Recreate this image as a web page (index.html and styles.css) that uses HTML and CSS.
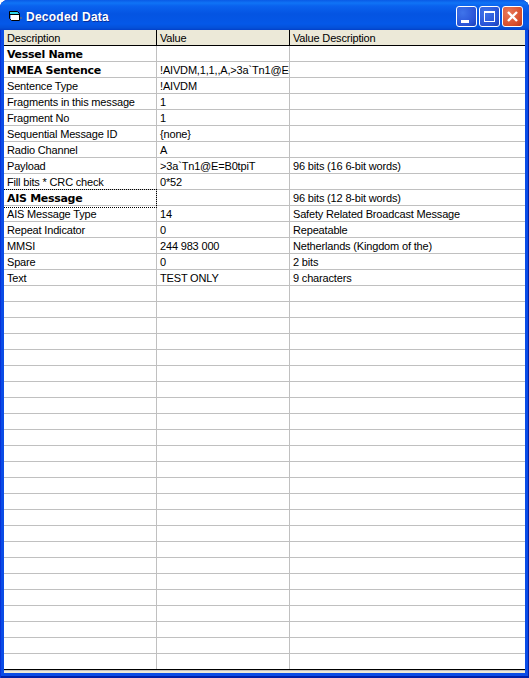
FILE: index.html
```html
<!DOCTYPE html>
<html lang="en">
<head>
<meta charset="utf-8">
<title>Decoded Data</title>
<link rel="stylesheet" href="styles.css">
</head>
<body>
<div class="window">
  <div class="titlebar">
    <svg class="app-icon" width="13" height="12" viewBox="0 0 13 12">
      <path d="M1.5 4.5V9.5L2.5 10.5H10.5V4.5z" fill="#fff"/>
      <path d="M0.5 1.5H8.5L10.5 3.5V10.5H2.5L0.5 8.5z" fill="none" stroke="#000"/>
      <path d="M1 2H8.3L10 4H1z" fill="#2fd6e8"/>
      <path d="M1 4.5H10" stroke="#000" fill="none"/>
      <path d="M11 8h2" stroke="#8a7a4a" fill="none"/>
    </svg>
    <span class="title">Decoded Data</span>
    <div class="controls">
      <div class="btn btn-blue">
        <svg width="19" height="19" viewBox="0 0 19 19"><rect x="4" y="13" width="8" height="3" fill="#fff"/></svg>
      </div>
      <div class="btn btn-blue">
        <svg width="19" height="19" viewBox="0 0 19 19"><rect x="4.5" y="4.5" width="10" height="10" fill="none" stroke="#fff"/><rect x="4" y="4" width="11" height="2" fill="#fff"/></svg>
      </div>
      <div class="btn btn-red">
        <svg width="19" height="19" viewBox="0 0 19 19"><path d="M5 5l9 9M14 5l-9 9" stroke="#fff" stroke-width="2.4" fill="none"/></svg>
      </div>
    </div>
  </div>
  <div class="client">
    <div class="grid">
      <div class="row head"><div class="cell">Description</div><div class="cell">Value</div><div class="cell">Value Description</div></div>
      <div class="row"><div class="cell bold">Vessel Name</div><div class="cell"></div><div class="cell"></div></div>
      <div class="row"><div class="cell bold">NMEA Sentence</div><div class="cell">!AIVDM,1,1,,A,&gt;3a`Tn1@E=B0tpiT,0*52</div><div class="cell"></div></div>
      <div class="row"><div class="cell">Sentence Type</div><div class="cell">!AIVDM</div><div class="cell"></div></div>
      <div class="row"><div class="cell">Fragments in this message</div><div class="cell">1</div><div class="cell"></div></div>
      <div class="row"><div class="cell">Fragment No</div><div class="cell">1</div><div class="cell"></div></div>
      <div class="row"><div class="cell">Sequential Message ID</div><div class="cell">{none}</div><div class="cell"></div></div>
      <div class="row"><div class="cell">Radio Channel</div><div class="cell">A</div><div class="cell"></div></div>
      <div class="row"><div class="cell">Payload</div><div class="cell">&gt;3a`Tn1@E=B0tpiT</div><div class="cell">96 bits (16 6-bit words)</div></div>
      <div class="row"><div class="cell">Fill bits * CRC check</div><div class="cell">0*52</div><div class="cell"></div></div>
      <div class="row"><div class="cell bold focus">AIS Message</div><div class="cell"></div><div class="cell">96 bits (12 8-bit words)</div></div>
      <div class="row"><div class="cell">AIS Message Type</div><div class="cell">14</div><div class="cell">Safety Related Broadcast Message</div></div>
      <div class="row"><div class="cell">Repeat Indicator</div><div class="cell">0</div><div class="cell">Repeatable</div></div>
      <div class="row"><div class="cell">MMSI</div><div class="cell">244 983 000</div><div class="cell">Netherlands (Kingdom of the)</div></div>
      <div class="row"><div class="cell">Spare</div><div class="cell">0</div><div class="cell">2 bits</div></div>
      <div class="row"><div class="cell">Text</div><div class="cell">TEST ONLY</div><div class="cell">9 characters</div></div>
      <div class="row"><div class="cell"></div><div class="cell"></div><div class="cell"></div></div>
      <div class="row"><div class="cell"></div><div class="cell"></div><div class="cell"></div></div>
      <div class="row"><div class="cell"></div><div class="cell"></div><div class="cell"></div></div>
      <div class="row"><div class="cell"></div><div class="cell"></div><div class="cell"></div></div>
      <div class="row"><div class="cell"></div><div class="cell"></div><div class="cell"></div></div>
      <div class="row"><div class="cell"></div><div class="cell"></div><div class="cell"></div></div>
      <div class="row"><div class="cell"></div><div class="cell"></div><div class="cell"></div></div>
      <div class="row"><div class="cell"></div><div class="cell"></div><div class="cell"></div></div>
      <div class="row"><div class="cell"></div><div class="cell"></div><div class="cell"></div></div>
      <div class="row"><div class="cell"></div><div class="cell"></div><div class="cell"></div></div>
      <div class="row"><div class="cell"></div><div class="cell"></div><div class="cell"></div></div>
      <div class="row"><div class="cell"></div><div class="cell"></div><div class="cell"></div></div>
      <div class="row"><div class="cell"></div><div class="cell"></div><div class="cell"></div></div>
      <div class="row"><div class="cell"></div><div class="cell"></div><div class="cell"></div></div>
      <div class="row"><div class="cell"></div><div class="cell"></div><div class="cell"></div></div>
      <div class="row"><div class="cell"></div><div class="cell"></div><div class="cell"></div></div>
      <div class="row"><div class="cell"></div><div class="cell"></div><div class="cell"></div></div>
      <div class="row"><div class="cell"></div><div class="cell"></div><div class="cell"></div></div>
      <div class="row"><div class="cell"></div><div class="cell"></div><div class="cell"></div></div>
      <div class="row"><div class="cell"></div><div class="cell"></div><div class="cell"></div></div>
      <div class="row"><div class="cell"></div><div class="cell"></div><div class="cell"></div></div>
      <div class="row"><div class="cell"></div><div class="cell"></div><div class="cell"></div></div>
      <div class="row"><div class="cell"></div><div class="cell"></div><div class="cell"></div></div>
      <div class="row last"><div class="cell"></div><div class="cell"></div><div class="cell"></div></div>
    </div>
    <div class="hscroll"></div>
  </div>
</div>
</body>
</html>
```
FILE: styles.css
```css
html, body {
  margin: 0;
  padding: 0;
  background: #fff;
  overflow: hidden;
}
.window {
  width: 529px;
  height: 678px;
  display: flex;
  flex-direction: column;
  box-sizing: border-box;
  border-radius: 8px 8px 0 0;
  overflow: hidden;
  background: #0a4ce6;
  box-shadow: inset 1px 0 #0831d9, inset -1px 0 #0020a8, inset 0 -2px #0020a8;
  font-family: "Liberation Sans", Arial, sans-serif;
}
.titlebar {
  height: 30px;
  flex: none;
  display: flex;
  align-items: center;
  padding: 0 6px 0 9px;
  box-sizing: border-box;
  background: linear-gradient(#0a5ae6 0, #0f74f6 3px, #0a62ee 6px, #0454e2 14px, #0458e8 24px, #0450d8 28px, #0340c8 30px);
}
.app-icon {
  flex: none;
  margin-top: 2px;
}
.title {
  margin-left: 4px;
  margin-top: 4px;
  color: #fff;
  font-family: "Liberation Sans", Arial, sans-serif;
  font-size: 12px;
  font-weight: 700;
  letter-spacing: 0.25px;
  text-shadow: 1px 1px 0 #0a2f9a;
}
.controls {
  margin-left: auto;
  display: flex;
  gap: 2px;
  padding-top: 2px;
}
.btn {
  width: 21px;
  height: 21px;
  box-sizing: border-box;
  border: 1px solid #fff;
  border-radius: 3px;
  display: flex;
  align-items: center;
  justify-content: center;
}
.btn-blue {
  background: radial-gradient(circle at 30% 30%, #3f74ea, #2a55d8 65%, #1c3fb8);
}
.btn-red {
  background: radial-gradient(circle at 30% 30%, #e8795a, #d9512e 65%, #b8361a);
}
.client {
  flex: none;
  height: 643px;
  margin: 0 4px;
  background: #ece9d8;
  display: flex;
  flex-direction: column;
}
.grid {
  background: #fff;
  flex: none;
}
.row {
  display: grid;
  grid-template-columns: 153px 133px 1fr;
  height: 16px;
  box-sizing: border-box;
  border-bottom: 1px solid #c0c0c0;
}
.row.head {
  background: #ece9d8;
  border-bottom: 1px solid #000;
}
.row.last {
  border-bottom-color: #000;
}
.cell {
  min-width: 0;
  overflow: hidden;
  white-space: nowrap;
  box-sizing: border-box;
  padding-left: 3px;
  border-right: 1px solid #c0c0c0;
  font-size: 11px;
  line-height: 17px;
  letter-spacing: -0.17px;
  color: #000;
}
.cell:last-child {
  border-right: 0;
}
.head .cell {
  border-right-color: #000;
}
.cell.bold {
  font-family: "DejaVu Sans", sans-serif;
  font-size: 11px;
  font-weight: 700;
  letter-spacing: -0.3px;
}
.cell.focus {
  position: relative;
  overflow: visible;
}
.focus::after {
  content: "";
  position: absolute;
  left: 0;
  right: -1px;
  top: -1px;
  bottom: -1px;
  border: 1px dotted #000;
  border-left: 0;
}
.hscroll {
  height: 3px;
  flex: none;
  background: linear-gradient(#c0c0c0 0, #c0c0c0 1px, #ece9d8 1px);
}
```
